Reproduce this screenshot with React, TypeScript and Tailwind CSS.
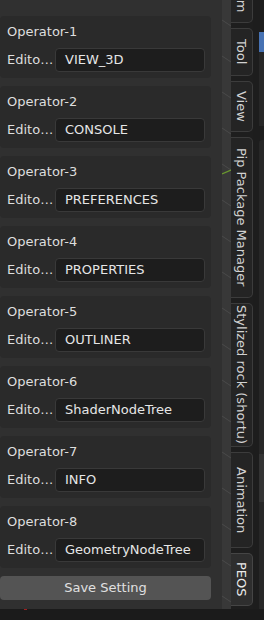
import React from "react";

const ops = [
  "VIEW_3D",
  "CONSOLE",
  "PREFERENCES",
  "PROPERTIES",
  "OUTLINER",
  "ShaderNodeTree",
  "INFO",
  "GeometryNodeTree",
];

const tabs: { label: string; h: string; active?: boolean; extra?: string }[] = [
  { label: "System", h: "h-[69px]", extra: "-mt-[46px]" },
  { label: "Tool", h: "h-[48px]" },
  { label: "View", h: "h-[51px]" },
  { label: "Pip Package Manager", h: "h-[161px]" },
  { label: "Stylized rock (shortu)", h: "h-[144px]" },
  { label: "Animation", h: "h-[96px]" },
  { label: "PEOS", h: "h-[53px]", active: true },
];

function Card({ i, value }: { i: number; value: string }) {
  return (
    <div className="w-[211px] h-[62px] shrink-0 rounded-[4px] bg-[#2a2a2a] pt-2 pb-[6px] pl-[7px] pr-[6px] flex flex-col gap-2">
      <div className="h-4 leading-4 text-[13px] text-[#dedede]">Operator-{i}</div>
      <div className="flex items-center h-6">
        <div className="w-[48px] text-[13px] leading-4 text-[#dedede] whitespace-nowrap">Edito…</div>
        <div className="w-[150px] h-6 rounded-[4px] bg-[#1d1d1d] border border-[#393939] pl-[9px] flex items-center text-[13px] leading-4 text-[#e6e6e6] whitespace-nowrap overflow-hidden">
          {value}
        </div>
      </div>
    </div>
  );
}

export default function App() {
  const lineYs = Array.from({ length: 17 }, (_, k) => 20 + k * 36);
  return (
    <div className="w-[264px] h-[620px] flex flex-col bg-[#1b1b1b] overflow-hidden font-['DejaVu_Sans',sans-serif]">
      <div className="flex h-[609px] shrink-0">
        <div className="w-[222px] bg-[#303030] flex flex-col gap-2 pt-4">
          {ops.map((v, idx) => (
            <Card key={idx} i={idx + 1} value={v} />
          ))}
          <div className="w-[211px] h-6 shrink-0 rounded-[4px] bg-[#545454] flex items-center justify-center text-[13px] text-[#e0e0e0]">
            Save Setting
          </div>
        </div>
        <div className="w-[9px] bg-[#383838] relative">
          <svg className="absolute inset-0" width="9" height="609" viewBox="0 0 9 609">
            {lineYs.map((y) => (
              <line key={y} x1="0" y1={y} x2="9" y2={y + 6} stroke="#4a4a4a" strokeWidth="1" />
            ))}
            <line x1="0" y1="174" x2="9" y2="170" stroke="#6b9a2e" strokeWidth="1.2" />
          </svg>
        </div>
        <div className="w-[22px] bg-[#1e1e1e] flex flex-col gap-[5px] overflow-hidden">
          {tabs.map((t) => (
            <div
              key={t.label}
              className={`${t.h} ${t.extra ?? ""} shrink-0 rounded-r-[5px] border-y border-r ${
                t.active ? "bg-[#2e2e2e] border-[#454545] text-[#ececec]" : "bg-[#242424] border-[#3c3c3c] text-[#d2d2d2]"
              } flex items-center justify-center`}
            >
              <span className="[writing-mode:vertical-rl] text-[13px] leading-[15px] whitespace-nowrap">{t.label}</span>
            </div>
          ))}
        </div>
        <div className="w-[11px] flex">
          <div className="w-[6px] bg-[#1d1d1d]" />
          <div className="w-[5px] flex flex-col bg-[#1d1d1d]">
            <div className="h-[32px] shrink-0" />
            <div className="h-[20px] shrink-0 bg-[#4772b3]" />
            <div className="h-[74px] shrink-0 bg-[#272727]" />
            <div className="h-[14px] shrink-0" />
            <div className="h-[314px] shrink-0 bg-[#272727] rounded-tl-[3px]" />
            <div className="h-[48px] shrink-0 bg-[#333333]" />
            <div className="flex-1 bg-[#272727]" />
          </div>
        </div>
      </div>
      <div className="flex-1 bg-[#1b1b1b] pl-[24px]">
        <div className="w-[3px] h-[1px] bg-[#a02020]" />
      </div>
    </div>
  );
}
